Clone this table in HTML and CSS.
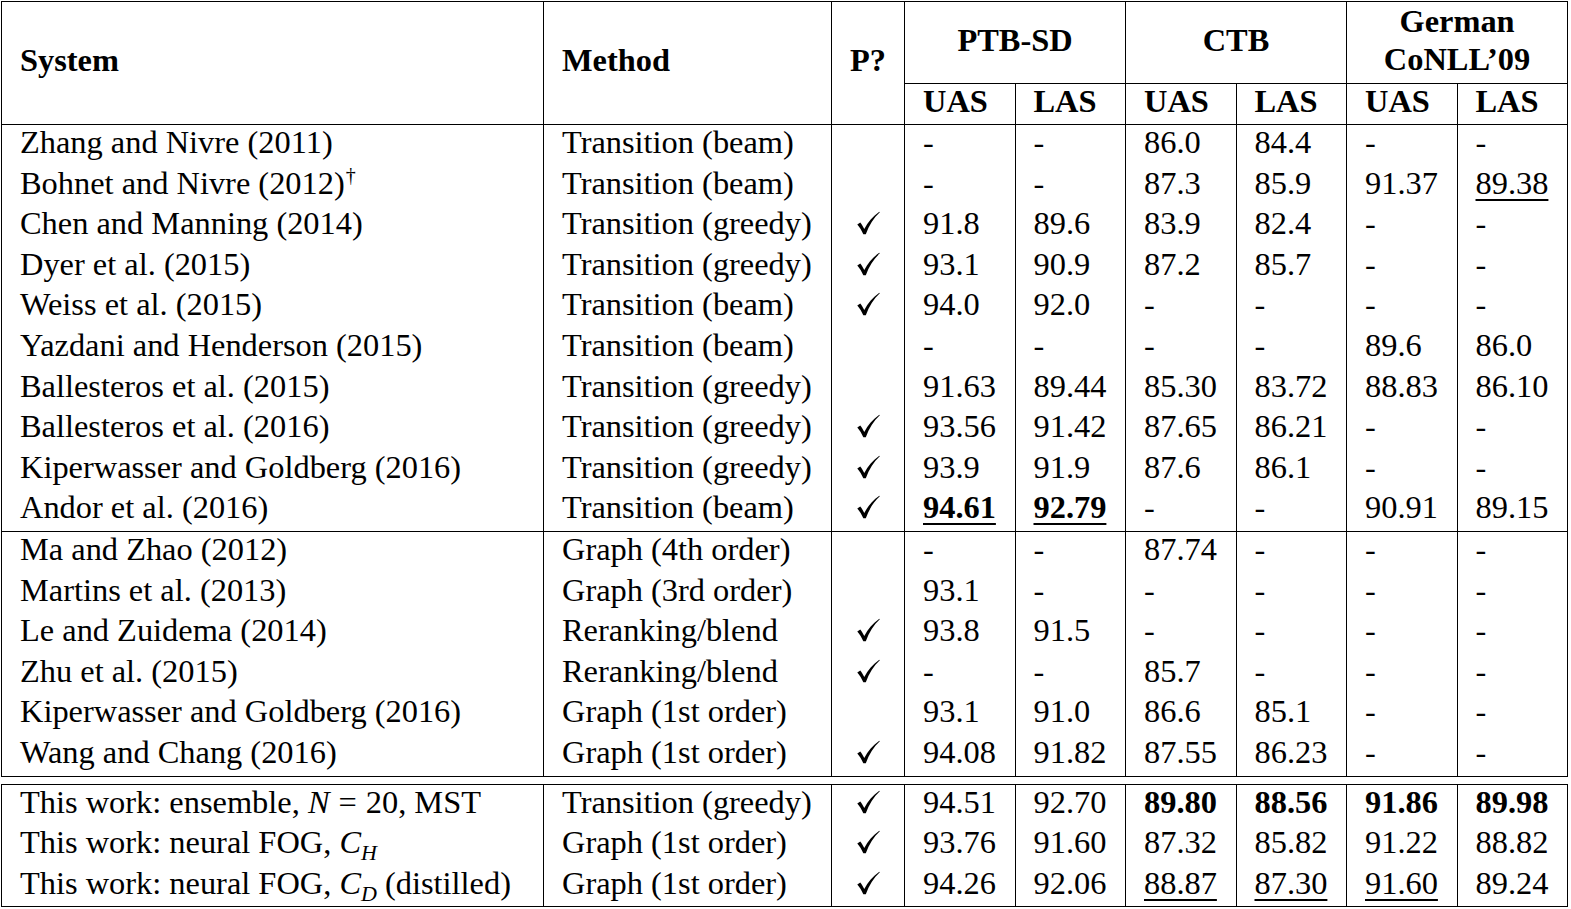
FILE: index.html
```html
<!DOCTYPE html>
<html lang="en">
<head>
<meta charset="utf-8">
<title>Dependency parsing results</title>
<link rel="stylesheet" href="styles.css">
</head>
<body>
<svg class="defs" width="0" height="0" aria-hidden="true">
  <symbol id="chk" viewBox="0 0 24 24">
    <path d="M0.3 13.6 L3.4 11.4 C4.8 13 6 15.4 7.6 18.2 C11.4 11 16.4 5 23.3 0.2 L23.8 0.9 C17.4 6.8 12.6 14.2 9.2 23.8 L6.6 23.8 C5 20.2 2.8 16.4 0.3 13.6 Z"/>
  </symbol>
</svg>
<table class="results">
  <colgroup>
    <col class="c-sys"><col class="c-met"><col class="c-p">
    <col class="c-n"><col class="c-n"><col class="c-n"><col class="c-n"><col class="c-n"><col class="c-n">
  </colgroup>
  <thead>
    <tr class="h1">
      <th rowspan="2" class="hs">System</th>
      <th rowspan="2" class="hs">Method</th>
      <th rowspan="2" class="hs ctr">P?</th>
      <th colspan="2" class="grp">PTB-SD</th>
      <th colspan="2" class="grp">CTB</th>
      <th colspan="2" class="grp">German<br>CoNLL’09</th>
    </tr>
    <tr class="h2">
      <th>UAS</th><th>LAS</th><th>UAS</th><th>LAS</th><th>UAS</th><th>LAS</th>
    </tr>
  </thead>
  <tbody>
    <tr class="first"><td>Zhang and Nivre (2011)</td><td>Transition (beam)</td><td class="ctr"></td><td>-</td><td>-</td><td>86.0</td><td>84.4</td><td>-</td><td>-</td></tr>
    <tr><td>Bohnet and Nivre (2012)<sup>†</sup></td><td>Transition (beam)</td><td class="ctr"></td><td>-</td><td>-</td><td>87.3</td><td>85.9</td><td>91.37</td><td><span class="u">89.38</span></td></tr>
    <tr><td>Chen and Manning (2014)</td><td>Transition (greedy)</td><td class="ctr"><svg class="ck"><use href="#chk"/></svg></td><td>91.8</td><td>89.6</td><td>83.9</td><td>82.4</td><td>-</td><td>-</td></tr>
    <tr><td>Dyer et al. (2015)</td><td>Transition (greedy)</td><td class="ctr"><svg class="ck"><use href="#chk"/></svg></td><td>93.1</td><td>90.9</td><td>87.2</td><td>85.7</td><td>-</td><td>-</td></tr>
    <tr><td>Weiss et al. (2015)</td><td>Transition (beam)</td><td class="ctr"><svg class="ck"><use href="#chk"/></svg></td><td>94.0</td><td>92.0</td><td>-</td><td>-</td><td>-</td><td>-</td></tr>
    <tr><td>Yazdani and Henderson (2015)</td><td>Transition (beam)</td><td class="ctr"></td><td>-</td><td>-</td><td>-</td><td>-</td><td>89.6</td><td>86.0</td></tr>
    <tr><td>Ballesteros et al. (2015)</td><td>Transition (greedy)</td><td class="ctr"></td><td>91.63</td><td>89.44</td><td>85.30</td><td>83.72</td><td>88.83</td><td>86.10</td></tr>
    <tr><td>Ballesteros et al. (2016)</td><td>Transition (greedy)</td><td class="ctr"><svg class="ck"><use href="#chk"/></svg></td><td>93.56</td><td>91.42</td><td>87.65</td><td>86.21</td><td>-</td><td>-</td></tr>
    <tr><td>Kiperwasser and Goldberg (2016)</td><td>Transition (greedy)</td><td class="ctr"><svg class="ck"><use href="#chk"/></svg></td><td>93.9</td><td>91.9</td><td>87.6</td><td>86.1</td><td>-</td><td>-</td></tr>
    <tr class="last"><td>Andor et al. (2016)</td><td>Transition (beam)</td><td class="ctr"><svg class="ck"><use href="#chk"/></svg></td><td><b class="u">94.61</b></td><td><b class="u">92.79</b></td><td>-</td><td>-</td><td>90.91</td><td>89.15</td></tr>

    <tr class="first"><td>Ma and Zhao (2012)</td><td>Graph (4th order)</td><td class="ctr"></td><td>-</td><td>-</td><td>87.74</td><td>-</td><td>-</td><td>-</td></tr>
    <tr><td>Martins et al. (2013)</td><td>Graph (3rd order)</td><td class="ctr"></td><td>93.1</td><td>-</td><td>-</td><td>-</td><td>-</td><td>-</td></tr>
    <tr><td>Le and Zuidema (2014)</td><td>Reranking/blend</td><td class="ctr"><svg class="ck"><use href="#chk"/></svg></td><td>93.8</td><td>91.5</td><td>-</td><td>-</td><td>-</td><td>-</td></tr>
    <tr><td>Zhu et al. (2015)</td><td>Reranking/blend</td><td class="ctr"><svg class="ck"><use href="#chk"/></svg></td><td>-</td><td>-</td><td>85.7</td><td>-</td><td>-</td><td>-</td></tr>
    <tr><td>Kiperwasser and Goldberg (2016)</td><td>Graph (1st order)</td><td class="ctr"></td><td>93.1</td><td>91.0</td><td>86.6</td><td>85.1</td><td>-</td><td>-</td></tr>
    <tr class="last"><td>Wang and Chang (2016)</td><td>Graph (1st order)</td><td class="ctr"><svg class="ck"><use href="#chk"/></svg></td><td>94.08</td><td>91.82</td><td>87.55</td><td>86.23</td><td>-</td><td>-</td></tr>

    <tr class="gap"><td colspan="9"></td></tr>

    <tr class="first"><td>This work: ensemble, <i class="m">N</i><span class="eq">=</span>20, MST</td><td>Transition (greedy)</td><td class="ctr"><svg class="ck"><use href="#chk"/></svg></td><td>94.51</td><td>92.70</td><td><b>89.80</b></td><td><b>88.56</b></td><td><b>91.86</b></td><td><b>89.98</b></td></tr>
    <tr><td>This work: neural FOG, <i class="m">C</i><sub><i>H</i></sub></td><td>Graph (1st order)</td><td class="ctr"><svg class="ck"><use href="#chk"/></svg></td><td>93.76</td><td>91.60</td><td>87.32</td><td>85.82</td><td>91.22</td><td>88.82</td></tr>
    <tr class="last"><td>This work: neural FOG, <i class="m">C</i><sub><i>D</i></sub> (distilled)</td><td>Graph (1st order)</td><td class="ctr"><svg class="ck"><use href="#chk"/></svg></td><td>94.26</td><td>92.06</td><td><span class="u">88.87</span></td><td><span class="u">87.30</span></td><td><span class="u">91.60</span></td><td>89.24</td></tr>
  </tbody>
</table>
</body>
</html>
```

FILE: styles.css
```css
html, body {
  margin: 0;
  padding: 0;
  background: #ffffff;
}

body {
  font-family: "Liberation Serif", "Times New Roman", serif;
  font-size: 32.4px;
  color: #000000;
}

.defs {
  position: absolute;
  width: 0;
  height: 0;
  overflow: hidden;
}

.results {
  border-collapse: collapse;
  table-layout: fixed;
  width: 1566px;
  margin: 1px 0 0 1px;
}

.c-sys { width: 542px; }
.c-met { width: 288px; }
.c-p   { width: 73px; }
.c-n   { width: 110.5px; }

.results th,
.results td {
  padding: 0 0 6px 18px;
  line-height: 34.6px;
  white-space: nowrap;
  text-align: left;
  vertical-align: baseline;
  border-left: 1.5px solid #000;
  border-right: 1.5px solid #000;
}

.results th {
  font-weight: bold;
}

.results thead tr.h1 th {
  border-top: 1.5px solid #000;
}

.results th.hs {
  vertical-align: middle;
  border-bottom: 1.5px solid #000;
  padding-bottom: 6px;
}

.results th.grp {
  text-align: center;
  padding: 0 0 5px 0;
  line-height: 38px;
  height: 76px;
  vertical-align: middle;
  border-bottom: 1.5px solid #000;
}

.results tr.h2 th {
  line-height: 34px;
  height: 34px;
  vertical-align: top;
  padding-top: 0;
  padding-bottom: 6px;
  border-bottom: 1.5px solid #000;
}

.results .ctr {
  text-align: center;
  padding-left: 0;
}

.results tr.first td {
  border-top: 1.5px solid #000;
}

.results tr.last td {
  border-bottom: 1.5px solid #000;
}

.results tr.gap td {
  height: 7px;
  line-height: 0;
  padding: 0;
  border: none;
}

.ck {
  width: 23px;
  height: 24px;
  vertical-align: -1px;
  fill: #000;
}

sup {
  font-size: 20px;
  line-height: 0;
  vertical-align: 12px;
  margin-left: 1px;
}

sub {
  font-size: 22px;
  line-height: 0;
  vertical-align: -7px;
}

.m {
  font-style: italic;
}

.eq {
  margin: 0 9px;
}

.u {
  text-decoration: underline;
  text-decoration-thickness: 1.5px;
  text-underline-offset: 5px;
}
```
